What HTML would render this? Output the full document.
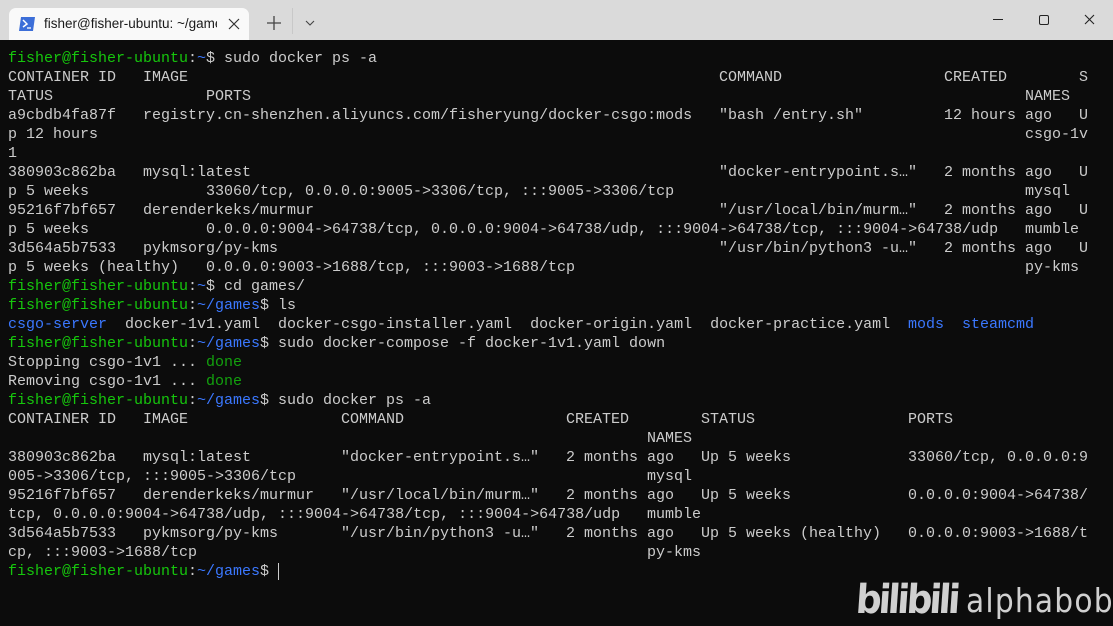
<!DOCTYPE html>
<html><head><meta charset="utf-8"><style>
body{margin:0;width:1113px;height:626px;overflow:hidden;background:#0c0c0c;position:relative;font-family:"Liberation Sans",sans-serif}
#tb{position:absolute;left:0;top:0;width:1113px;height:40px;background:#dadada}
#tab{position:absolute;left:9px;top:8px;width:240px;height:32px;background:#f9f9f9;border-radius:7px 7px 0 0}
.r{position:absolute;left:8px;height:19px;font:15px/19px "Liberation Mono",monospace;color:#cccccc;white-space:pre;margin-top:1px}
.r span{position:absolute;top:0}
.g{color:#16c60c}.b{color:#3b78ff}.d{color:#13a10e}
</style></head><body>
<div id="tb">
<div id="tab">
<svg style="position:absolute;left:10px;top:9px" width="16" height="14"><polygon points="2,0 16,0 14,14 0,14" fill="#3c6ed8"/><path d="M4,3 L8,7 L4,10" stroke="#fff" stroke-width="1.5" fill="none"/><path d="M8,11 H12" stroke="#fff" stroke-width="1.3"/></svg>
<div style="position:absolute;left:35px;top:8px;font-size:13.5px;color:#1a1a1a;width:173px;overflow:hidden;white-space:nowrap">fisher@fisher-ubuntu: ~/games</div>
<svg style="position:absolute;left:218px;top:9px" width="14" height="14"><path d="M2,2 L12,12 M12,2 L2,12" stroke="#333" stroke-width="1.2"/></svg>
</div>
<svg style="position:absolute;left:266px;top:15px" width="16" height="16"><path d="M8,1 V15 M1,8 H15" stroke="#444" stroke-width="1.3"/></svg>
<div style="position:absolute;left:292px;top:8px;width:1px;height:26px;background:#c8c8c8"></div>
<svg style="position:absolute;left:304px;top:19px" width="12" height="8"><path d="M2,2 L6,6 L10,2" stroke="#444" stroke-width="1.1" fill="none"/></svg>
<div style="position:absolute;left:993px;top:19px;width:10px;height:1px;background:#222"></div>
<div style="position:absolute;left:1039px;top:15px;width:8px;height:8px;border:1px solid #222;border-radius:2px"></div>
<svg style="position:absolute;left:1084px;top:14px" width="11" height="11"><path d="M1,1 L10,10 M10,1 L1,10" stroke="#222" stroke-width="1.1"/></svg>
</div>

<div class="r" style="top:48px"><span class="g" style="left:0">fisher@fisher-ubuntu</span><span style="left:180px">:</span><span class="b" style="left:189px">~</span><span style="left:198px">$ sudo docker ps -a</span></div>
<div class="r" style="top:67px"><span style="left:0">CONTAINER ID</span><span style="left:135px">IMAGE</span><span style="left:711px">COMMAND</span><span style="left:936px">CREATED</span><span style="left:1071px">S</span></div>
<div class="r" style="top:86px"><span style="left:0">TATUS</span><span style="left:198px">PORTS</span><span style="left:1017px">NAMES</span></div>
<div class="r" style="top:105px"><span style="left:0">a9cbdb4fa87f</span><span style="left:135px">registry.cn-shenzhen.aliyuncs.com/fisheryung/docker-csgo:mods</span><span style="left:711px">"bash /entry.sh"</span><span style="left:936px">12 hours ago</span><span style="left:1071px">U</span></div>
<div class="r" style="top:124px"><span style="left:0">p 12 hours</span><span style="left:1017px">csgo-1v</span></div>
<div class="r" style="top:143px"><span style="left:0">1</span></div>
<div class="r" style="top:162px"><span style="left:0">380903c862ba</span><span style="left:135px">mysql:latest</span><span style="left:711px">"docker-entrypoint.s…"</span><span style="left:936px">2 months ago</span><span style="left:1071px">U</span></div>
<div class="r" style="top:181px"><span style="left:0">p 5 weeks</span><span style="left:198px">33060/tcp, 0.0.0.0:9005-&gt;3306/tcp, :::9005-&gt;3306/tcp</span><span style="left:1017px">mysql</span></div>
<div class="r" style="top:200px"><span style="left:0">95216f7bf657</span><span style="left:135px">derenderkeks/murmur</span><span style="left:711px">"/usr/local/bin/murm…"</span><span style="left:936px">2 months ago</span><span style="left:1071px">U</span></div>
<div class="r" style="top:219px"><span style="left:0">p 5 weeks</span><span style="left:198px">0.0.0.0:9004-&gt;64738/tcp, 0.0.0.0:9004-&gt;64738/udp, :::9004-&gt;64738/tcp, :::9004-&gt;64738/udp</span><span style="left:1017px">mumble</span></div>
<div class="r" style="top:238px"><span style="left:0">3d564a5b7533</span><span style="left:135px">pykmsorg/py-kms</span><span style="left:711px">"/usr/bin/python3 -u…"</span><span style="left:936px">2 months ago</span><span style="left:1071px">U</span></div>
<div class="r" style="top:257px"><span style="left:0">p 5 weeks (healthy)</span><span style="left:198px">0.0.0.0:9003-&gt;1688/tcp, :::9003-&gt;1688/tcp</span><span style="left:1017px">py-kms</span></div>
<div class="r" style="top:276px"><span class="g" style="left:0">fisher@fisher-ubuntu</span><span style="left:180px">:</span><span class="b" style="left:189px">~</span><span style="left:198px">$ cd games/</span></div>
<div class="r" style="top:295px"><span class="g" style="left:0">fisher@fisher-ubuntu</span><span style="left:180px">:</span><span class="b" style="left:189px">~/games</span><span style="left:252px">$ ls</span></div>
<div class="r" style="top:314px"><span class="b" style="left:0">csgo-server</span><span style="left:117px">docker-1v1.yaml  docker-csgo-installer.yaml  docker-origin.yaml  docker-practice.yaml</span><span class="b" style="left:900px">mods</span><span class="b" style="left:954px">steamcmd</span></div>
<div class="r" style="top:333px"><span class="g" style="left:0">fisher@fisher-ubuntu</span><span style="left:180px">:</span><span class="b" style="left:189px">~/games</span><span style="left:252px">$ sudo docker-compose -f docker-1v1.yaml down</span></div>
<div class="r" style="top:352px"><span style="left:0">Stopping csgo-1v1 ...</span><span class="d" style="left:198px">done</span></div>
<div class="r" style="top:371px"><span style="left:0">Removing csgo-1v1 ...</span><span class="d" style="left:198px">done</span></div>
<div class="r" style="top:390px"><span class="g" style="left:0">fisher@fisher-ubuntu</span><span style="left:180px">:</span><span class="b" style="left:189px">~/games</span><span style="left:252px">$ sudo docker ps -a</span></div>
<div class="r" style="top:409px"><span style="left:0">CONTAINER ID</span><span style="left:135px">IMAGE</span><span style="left:333px">COMMAND</span><span style="left:558px">CREATED</span><span style="left:693px">STATUS</span><span style="left:900px">PORTS</span></div>
<div class="r" style="top:428px"><span style="left:639px">NAMES</span></div>
<div class="r" style="top:447px"><span style="left:0">380903c862ba</span><span style="left:135px">mysql:latest</span><span style="left:333px">"docker-entrypoint.s…"</span><span style="left:558px">2 months ago</span><span style="left:693px">Up 5 weeks</span><span style="left:900px">33060/tcp, 0.0.0.0:9</span></div>
<div class="r" style="top:466px"><span style="left:0">005-&gt;3306/tcp, :::9005-&gt;3306/tcp</span><span style="left:639px">mysql</span></div>
<div class="r" style="top:485px"><span style="left:0">95216f7bf657</span><span style="left:135px">derenderkeks/murmur</span><span style="left:333px">"/usr/local/bin/murm…"</span><span style="left:558px">2 months ago</span><span style="left:693px">Up 5 weeks</span><span style="left:900px">0.0.0.0:9004-&gt;64738/</span></div>
<div class="r" style="top:504px"><span style="left:0">tcp, 0.0.0.0:9004-&gt;64738/udp, :::9004-&gt;64738/tcp, :::9004-&gt;64738/udp</span><span style="left:639px">mumble</span></div>
<div class="r" style="top:523px"><span style="left:0">3d564a5b7533</span><span style="left:135px">pykmsorg/py-kms</span><span style="left:333px">"/usr/bin/python3 -u…"</span><span style="left:558px">2 months ago</span><span style="left:693px">Up 5 weeks (healthy)</span><span style="left:900px">0.0.0.0:9003-&gt;1688/t</span></div>
<div class="r" style="top:542px"><span style="left:0">cp, :::9003-&gt;1688/tcp</span><span style="left:639px">py-kms</span></div>
<div class="r" style="top:561px"><span class="g" style="left:0">fisher@fisher-ubuntu</span><span style="left:180px">:</span><span class="b" style="left:189px">~/games</span><span style="left:252px">$</span></div>
<div style="position:absolute;left:278px;top:563px;width:1px;height:17px;background:#ccc"></div>

<div style="position:absolute;left:856px;top:578px;font:bold 40px/44px 'DejaVu Sans Condensed','DejaVu Sans',sans-serif;color:#d0d0d0;letter-spacing:-3px;transform:skewX(-4deg)">bilibili</div>
<div style="position:absolute;left:966px;top:579px;font:33px/44px 'DejaVu Sans Condensed','DejaVu Sans',sans-serif;color:#d0d0d0;letter-spacing:1.2px">alphabob</div>
</body></html>
